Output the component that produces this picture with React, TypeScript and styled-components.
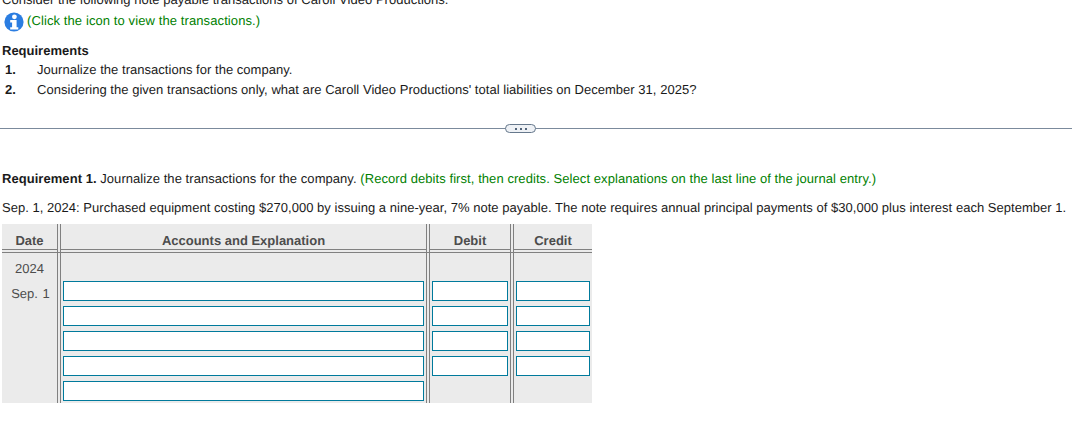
import React from "react";
import styled, { createGlobalStyle } from "styled-components";

const Global = createGlobalStyle`
  html, body { margin: 0; padding: 0; background: #fff; overflow: hidden; }
  body { font-family: "Liberation Sans", Arial, sans-serif; font-size: 13px; color: #1a1a1a; text-rendering: geometricPrecision; }
`;
const Page = styled.div`
  width: 1072px;
  height: 442px;
  overflow: hidden;
`;
const Intro = styled.div`
  height: 7px;
  padding-left: 2px;
  line-height: 14px;
  margin-top: -7px;
  letter-spacing: 0.03px;
  white-space: nowrap;
`;
const Hint = styled.div`
  display: flex;
  align-items: flex-start;
  gap: 3px;
  height: 22px;
  margin: 12px 0 0 4px;
  color: #008000;
  letter-spacing: 0.1px;
`;
const HintText = styled.span`
  line-height: 18px;
`;
const RequirementsTitle = styled.div`
  margin: 9px 0 0 2px;
  height: 16px;
  line-height: 16px;
  font-weight: 700;
`;
const ReqList = styled.ol`
  list-style: none;
  margin: 1px 0 0 0;
  padding: 0;
`;
const ReqItem = styled.li`
  display: flex;
  height: 20px;
  line-height: 20px;
  letter-spacing: 0.03px;
`;
const ReqNum = styled.span`
  width: 37px;
  padding-left: 5px;
  box-sizing: border-box;
  font-weight: 700;
`;
const Divider = styled.div`
  position: relative;
  height: 1px;
  margin-top: 28px;
  background: #7b8a9c;
`;
const Expand = styled.button`
  position: absolute;
  left: 505px;
  top: -4px;
  width: 31px;
  height: 9px;
  padding: 0;
  border: 1px solid #66788c;
  border-radius: 5px;
  background: #eef1f5;
  display: flex;
  align-items: center;
  justify-content: center;
  gap: 3px;
`;
const Dot = styled.i`
  width: 2px;
  height: 2px;
  background: #53647a;
`;
const Instruction = styled.div`
  margin: 42px 0 0 2px;
  height: 16px;
  line-height: 16px;
  white-space: nowrap;
  letter-spacing: 0.05px;
`;
const Green = styled.span`
  color: #008000;
  letter-spacing: 0.07px;
`;
const Problem = styled.div`
  margin: 13px 0 0 2px;
  height: 16px;
  line-height: 16px;
  letter-spacing: 0.028px;
  white-space: nowrap;
`;
const Table = styled.div`
  width: 590px;
  margin: 8px 0 0 2px;
  background: #ebebeb;
  color: #4d4d4d;
`;
const columns = `56px 367px 82px 79px`;
const HeadRow = styled.div`
  display: grid;
  grid-template-columns: ${columns};
  column-gap: 2px;
  height: 28px;
`;
const HeadCell = styled.div<{ $last?: boolean; $first?: boolean }>`
  box-sizing: border-box;
  height: 28px;
  border-left: ${(p) => (p.$first ? "0" : "1px solid #808080")};
  border-right: ${(p) => (p.$last ? "0" : "1px solid #808080")};
`;
const HeadLabel = styled.div`
  box-sizing: border-box;
  height: 26px;
  line-height: 33px;
  border-bottom: 1px solid #808080;
  text-align: center;
  font-weight: 700;
  overflow: hidden;
`;
const BodyRow = styled.div`
  display: grid;
  grid-template-columns: ${columns};
  column-gap: 2px;
  height: 151px;
  border-top: 1px solid #808080;
  box-sizing: border-box;
`;
const DateCell = styled.div`
  box-sizing: border-box;
  border-right: 1px solid #808080;
  text-align: center;
`;
const Year = styled.div`
  height: 25px;
  line-height: 31px;
`;
const Day = styled.div`
  height: 25px;
  line-height: 31px;
  word-spacing: 1px;
  padding-left: 2px;
`;
const InputCell = styled.div<{ $last?: boolean }>`
  box-sizing: border-box;
  border-left: 1px solid #808080;
  border-right: ${(p) => (p.$last ? "0" : "1px solid #808080")};
  padding: 28px 2px 0;
  display: flex;
  flex-direction: column;
  gap: 5px;
`;
const Field = styled.input`
  box-sizing: border-box;
  display: block;
  width: 100%;
  height: 20px;
  padding: 0;
  border: 1px solid #007a9c;
  border-radius: 0;
  background: #fff;
  outline: none;
`;

const rows = (n: number, prefix: string) =>
  Array.from({ length: n }, (_, i) => <Field key={i} aria-label={`${prefix} ${i + 1}`} />);

export default function App() {
  return (
    <Page>
      <Global />
      <Intro>Consider the following note payable transactions of Caroll Video Productions.</Intro>
      <Hint>
        <svg width="20" height="20" viewBox="0 0 20 20" aria-hidden="true">
          <circle cx="10" cy="10" r="9.6" fill="#2b7de1" />
          <circle cx="10.4" cy="4.8" r="2.4" fill="#fff" />
          <path d="M6.2 8h6.4v7.2h1.7v2.4H6.2v-2.4h1.9v-4.8H6.2z" fill="#fff" />
        </svg>
        <HintText>(Click the icon to view the transactions.)</HintText>
      </Hint>
      <RequirementsTitle>Requirements</RequirementsTitle>
      <ReqList>
        <ReqItem>
          <ReqNum>1.</ReqNum>
          <span>Journalize the transactions for the company.</span>
        </ReqItem>
        <ReqItem>
          <ReqNum>2.</ReqNum>
          <span>Considering the given transactions only, what are Caroll Video Productions' total liabilities on December 31, 2025?</span>
        </ReqItem>
      </ReqList>
      <Divider>
        <Expand aria-label="Expand">
          <Dot />
          <Dot />
          <Dot />
        </Expand>
      </Divider>
      <Instruction>
        <b>Requirement 1.</b> Journalize the transactions for the company.{" "}
        <Green>(Record debits first, then credits. Select explanations on the last line of the journal entry.)</Green>
      </Instruction>
      <Problem>
        Sep. 1, 2024: Purchased equipment costing $270,000 by issuing a nine-year, 7% note payable. The note requires annual principal payments of $30,000 plus interest each September 1.
      </Problem>
      <Table>
        <HeadRow>
          <HeadCell $first><HeadLabel>Date</HeadLabel></HeadCell>
          <HeadCell><HeadLabel>Accounts and Explanation</HeadLabel></HeadCell>
          <HeadCell><HeadLabel>Debit</HeadLabel></HeadCell>
          <HeadCell $last><HeadLabel>Credit</HeadLabel></HeadCell>
        </HeadRow>
        <BodyRow>
          <DateCell>
            <Year>2024</Year>
            <Day>Sep. 1</Day>
          </DateCell>
          <InputCell>{rows(5, "Account")}</InputCell>
          <InputCell>{rows(4, "Debit")}</InputCell>
          <InputCell $last>{rows(4, "Credit")}</InputCell>
        </BodyRow>
      </Table>
    </Page>
  );
}
